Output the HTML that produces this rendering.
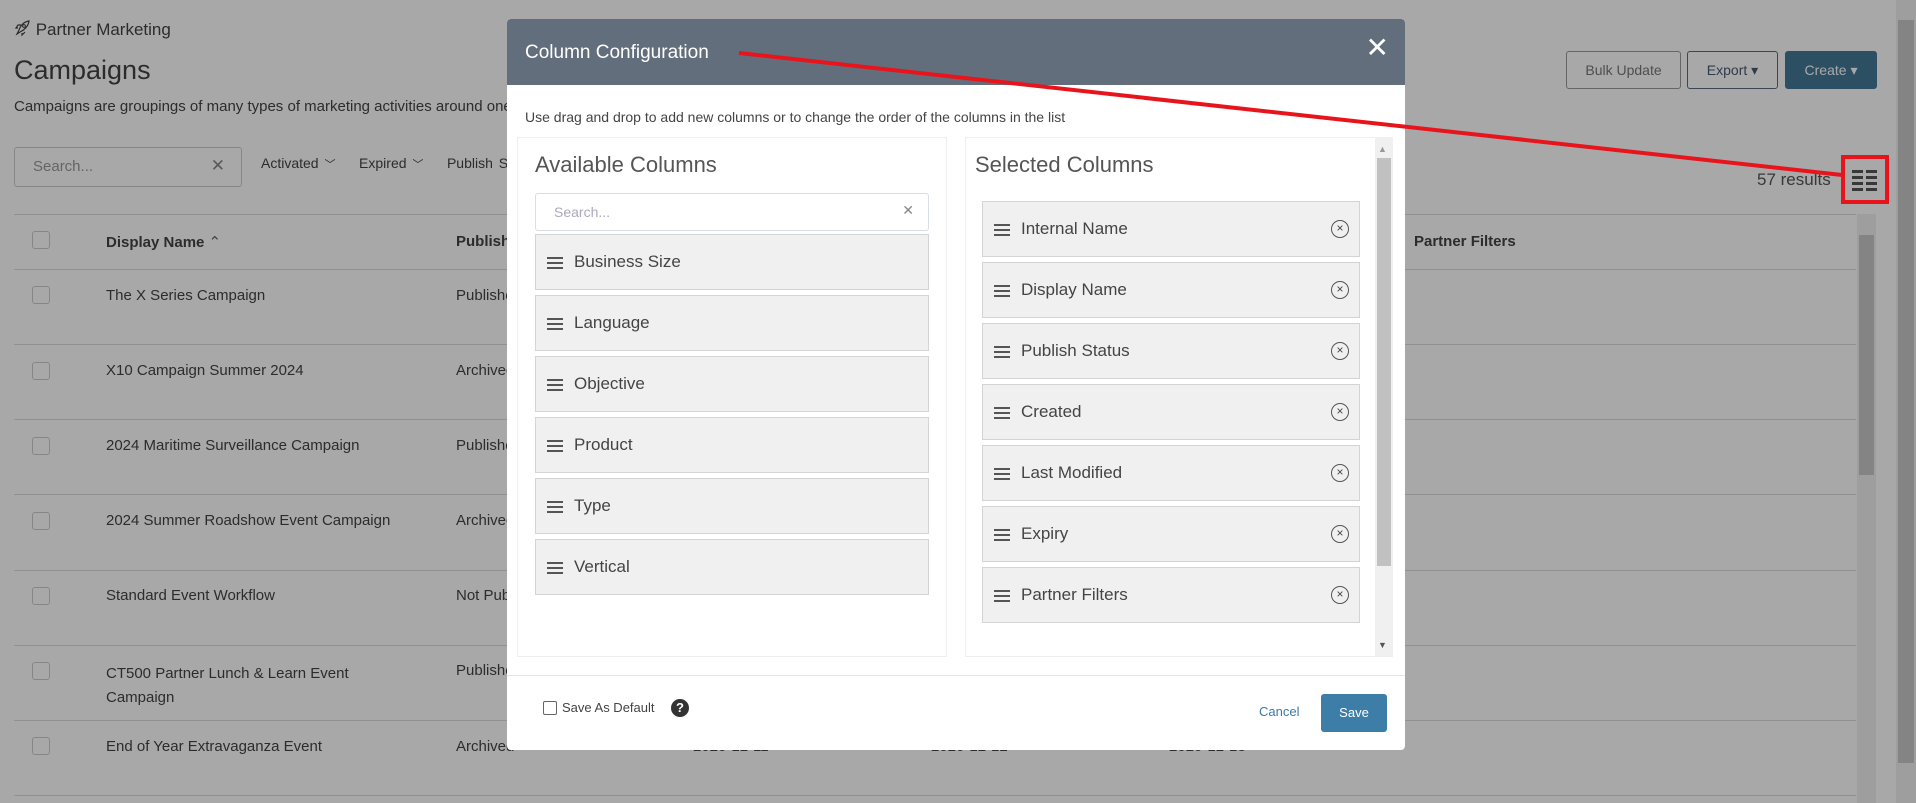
<!DOCTYPE html>
<html><head><meta charset="utf-8"><style>
*{box-sizing:border-box;margin:0;padding:0}
body{width:1916px;height:803px;overflow:hidden;background:#fff;font-family:"Liberation Sans",sans-serif;color:#333;position:relative}
.abs{position:absolute}
.chk{position:absolute;width:18px;height:18px;border:1px solid #ccc;border-radius:3px;background:#fff}
.row{position:absolute;left:14px;width:1842px;height:1px;background:#ddd}
.cell{position:absolute;font-size:15px;color:#444}
.btn{position:absolute;height:38px;border:1px solid #5a6a80;border-radius:3px;font-size:14px;display:flex;align-items:center;justify-content:center;color:#4a5a70}
.overlay{position:absolute;left:0;top:0;width:1916px;height:803px;background:rgba(0,0,0,.34)}
.modal{position:absolute;left:507px;top:19px;width:898px;height:731px;background:#fff;border-radius:4px;overflow:hidden}
.mh{height:66px;background:#636e7d;color:#fff;font-size:19px;padding:23px 18px}
.panel{position:absolute;border:1px solid #eee;background:#fff}
.item{position:absolute;height:56px;background:#f0f0f0;border:1px solid #d4d4d4;font-size:17px;color:#444;padding:0 0 0 38px;display:flex;align-items:center}
.item .hb{position:absolute;left:11px;top:22px;width:16px;height:12px;border-top:2px solid #555;border-bottom:2px solid #555}
.item .hb:after{content:"";position:absolute;left:0;top:3px;width:16px;height:2px;background:#555}
.item .rm{position:absolute;right:10px;top:18px;width:18px;height:18px;border:1.5px solid #555;border-radius:50%;font-size:12px;line-height:15px;text-align:center;color:#444}
</style></head><body>
<!-- page -->
<div class="abs" style="left:14px;top:19px;font-size:17px;color:#444">
<svg width="17" height="18" viewBox="0 0 17 18" style="vertical-align:-2px"><path d="M3 15 L5 11 Q8 3 15 2 Q14 9 6 13 Z M4 9 L2 9 L4 6 L7 6 M8 14 L8 16 L11 13" fill="none" stroke="#444" stroke-width="1.2"/><circle cx="10" cy="7" r="1.4" fill="none" stroke="#444"/></svg> Partner Marketing</div>
<div class="abs" style="left:14px;top:55px;font-size:27px;color:#444">Campaigns</div>
<div class="abs" style="left:14px;top:98px;font-size:15px;color:#444;white-space:nowrap">Campaigns are groupings of many types of marketing activities around one theme</div>
<div class="abs" style="left:14px;top:147px;width:228px;height:40px;border:1px solid #ccc;border-radius:3px;font-size:15px;color:#999;padding:10px 18px">Search...<span style="position:absolute;right:16px;top:8px;color:#888;font-size:17px">✕</span></div>
<div class="abs" style="left:261px;top:155px;font-size:14px;color:#444;word-spacing:2px">Activated <span style="font-size:11px">﹀</span>&nbsp;&nbsp;&nbsp; Expired <span style="font-size:11px">﹀</span>&nbsp;&nbsp;&nbsp; Publish Status</div>
<div class="btn" style="left:1566px;top:51px;width:115px;border-color:#999;color:#777">Bulk Update</div>
<div class="btn" style="left:1687px;top:51px;width:91px">Export ▾</div>
<div class="btn" style="left:1785px;top:51px;width:92px;background:#457898;border-color:#457898;color:#fff">Create ▾</div>
<div class="abs" style="left:1757px;top:170px;font-size:17px;color:#555">57 results</div>
<div class="abs" style="left:1852px;top:170px;width:26px;height:20px">
<div style="position:absolute;left:0;top:0;width:11px;height:2.5px;background:#555;box-shadow:0 6px #555,0 12px #555,0 18px #555"></div>
<div style="position:absolute;left:14px;top:0;width:11px;height:2.5px;background:#555;box-shadow:0 6px #555,0 12px #555,0 18px #555"></div></div>
<div class="row" style="top:214px"></div>
<div class="chk" style="left:32px;top:231px"></div>
<div class="cell" style="left:106px;top:233px;font-weight:bold">Display Name <span style="font-weight:normal;color:#666">⌃</span></div>
<div class="cell" style="left:456px;top:233px;font-weight:bold">Publish Status</div>
<div class="cell" style="left:1414px;top:233px;font-weight:bold">Partner Filters</div>
<div class="row" style="top:269px"></div>
<div class="chk" style="left:32px;top:286px"></div><div class="cell" style="left:106px;top:287px">The X Series Campaign</div><div class="cell" style="left:456px;top:287px">Published</div>
<div class="row" style="top:344px"></div>
<div class="chk" style="left:32px;top:362px"></div><div class="cell" style="left:106px;top:362px">X10 Campaign Summer 2024</div><div class="cell" style="left:456px;top:362px">Archived</div>
<div class="row" style="top:419px"></div>
<div class="chk" style="left:32px;top:437px"></div><div class="cell" style="left:106px;top:437px">2024 Maritime Surveillance Campaign</div><div class="cell" style="left:456px;top:437px">Published</div>
<div class="row" style="top:494px"></div>
<div class="chk" style="left:32px;top:512px"></div><div class="cell" style="left:106px;top:512px">2024 Summer Roadshow Event Campaign</div><div class="cell" style="left:456px;top:512px">Archived</div>
<div class="row" style="top:570px"></div>
<div class="chk" style="left:32px;top:587px"></div><div class="cell" style="left:106px;top:587px">Standard Event Workflow</div><div class="cell" style="left:456px;top:587px">Not Published</div>
<div class="row" style="top:645px"></div>
<div class="chk" style="left:32px;top:662px"></div><div class="cell" style="left:106px;top:662px;line-height:24px">CT500 Partner Lunch &amp; Learn Event<br>Campaign</div><div class="cell" style="left:456px;top:662px">Published</div>
<div class="row" style="top:720px"></div>
<div class="chk" style="left:32px;top:737px"></div><div class="cell" style="left:106px;top:738px">End of Year Extravaganza Event</div><div class="cell" style="left:456px;top:738px">Archived</div>
<div class="cell" style="left:693px;top:738px">2020-12-11</div><div class="cell" style="left:931px;top:738px">2020-12-12</div><div class="cell" style="left:1169px;top:738px">2020-12-13</div>
<div class="row" style="top:795px"></div>
<div class="abs" style="left:1857px;top:214px;width:19px;height:589px;background:#f0f0f0"></div>
<div class="abs" style="left:1859px;top:235px;width:15px;height:240px;background:#c8c8c8"></div>
<div class="abs" style="left:1896px;top:0;width:20px;height:803px;background:#f0f0f0"></div>
<div class="abs" style="left:1898px;top:20px;width:16px;height:743px;background:#c8c8c8"></div>
<div class="overlay"></div>
<!-- modal -->
<div class="modal">
<div class="mh">Column Configuration<span style="position:absolute;right:16px;top:12px;font-size:28px">✕</span></div>
<div class="abs" style="left:18px;top:90px;font-size:14px;color:#444">Use drag and drop to add new columns or to change the order of the columns in the list</div>
<div class="panel" style="left:10px;top:118px;width:430px;height:520px">
<div class="abs" style="left:17px;top:14px;font-size:22px;color:#555;font-weight:300">Available Columns</div>
<div class="abs" style="left:17px;top:55px;width:394px;height:38px;border:1px solid #d8dde6;border-radius:3px;font-size:14px;color:#aab;padding:10px 18px">Search...<span style="position:absolute;right:14px;top:8px;color:#888">✕</span></div>
<div class="item" style="left:17px;top:96px;width:394px"><span class="hb"></span>Business Size</div>
<div class="item" style="left:17px;top:157px;width:394px"><span class="hb"></span>Language</div>
<div class="item" style="left:17px;top:218px;width:394px"><span class="hb"></span>Objective</div>
<div class="item" style="left:17px;top:279px;width:394px"><span class="hb"></span>Product</div>
<div class="item" style="left:17px;top:340px;width:394px"><span class="hb"></span>Type</div>
<div class="item" style="left:17px;top:401px;width:394px"><span class="hb"></span>Vertical</div>
</div>
<div class="panel" style="left:458px;top:118px;width:428px;height:520px">
<div class="abs" style="left:9px;top:14px;font-size:22px;color:#555">Selected Columns</div>
<div class="item" style="left:16px;top:63px;width:378px"><span class="hb"></span>Internal Name<span class="rm">×</span></div>
<div class="item" style="left:16px;top:124px;width:378px"><span class="hb"></span>Display Name<span class="rm">×</span></div>
<div class="item" style="left:16px;top:185px;width:378px"><span class="hb"></span>Publish Status<span class="rm">×</span></div>
<div class="item" style="left:16px;top:246px;width:378px"><span class="hb"></span>Created<span class="rm">×</span></div>
<div class="item" style="left:16px;top:307px;width:378px"><span class="hb"></span>Last Modified<span class="rm">×</span></div>
<div class="item" style="left:16px;top:368px;width:378px"><span class="hb"></span>Expiry<span class="rm">×</span></div>
<div class="item" style="left:16px;top:429px;width:378px"><span class="hb"></span>Partner Filters<span class="rm">×</span></div>
<div class="abs" style="left:409px;top:0;width:18px;height:518px;background:#f0f0f0"></div>
<div class="abs" style="left:411px;top:20px;width:14px;height:408px;background:#c1c1c1"></div>
<div class="abs" style="left:412px;top:6px;font-size:9px;color:#999">▲</div>
<div class="abs" style="left:412px;top:502px;font-size:9px;color:#555">▼</div>
</div>
<div class="abs" style="left:0;top:656px;width:898px;height:1px;background:#e5e5e5"></div>
<div class="abs" style="left:36px;top:682px;width:14px;height:14px;border:1px solid #666;border-radius:2px"></div>
<div class="abs" style="left:55px;top:681px;font-size:13px;color:#444">Save As Default</div>
<div class="abs" style="left:164px;top:680px;width:18px;height:18px;border-radius:50%;background:#333;color:#fff;font-size:13px;font-weight:bold;text-align:center;line-height:18px">?</div>
<div class="abs" style="left:752px;top:685px;font-size:13px;color:#3a7aa8">Cancel</div>
<div class="abs" style="left:814px;top:675px;width:66px;height:38px;background:#3d7ea8;border-radius:3px;color:#fff;font-size:13px;text-align:center;line-height:38px">Save</div>
</div>
<!-- annotation -->
<svg class="abs" style="left:0;top:0" width="1916" height="803"><line x1="739" y1="53" x2="1842" y2="175" stroke="#e8141c" stroke-width="4"/><rect x="1843" y="157" width="44" height="45" fill="none" stroke="#e8141c" stroke-width="4"/></svg>
</body></html>
